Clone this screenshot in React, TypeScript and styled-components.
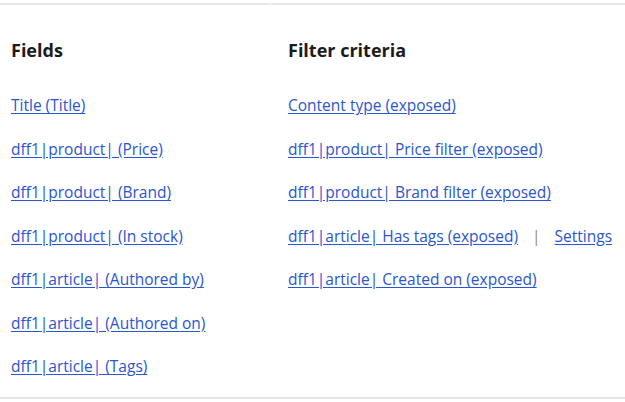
import styled, { createGlobalStyle } from "styled-components";

const GlobalStyle = createGlobalStyle`
  body {
    margin: 0;
    background: #fff;
    font-family: "Open Sans", "Noto Sans", sans-serif;
  }
`;

const Page = styled.div`
  padding-top: 3px;
  width: 625px;
  height: 402px;
  box-sizing: border-box;
`;

const Table = styled.div`
  display: grid;
  grid-template-columns: 270px 1fr;
  column-gap: 1px;
  height: 394px;
  border-bottom: 2px solid #e4e4e4;
`;

const Column = styled.div<{ $pad: number }>`
  border-top: 2px solid #e6e6e6;
  padding-left: ${({ $pad }) => $pad}px;
  padding-top: 33px;
`;

const Heading = styled.h2`
  margin: 0 0 33px;
  font-size: 18px;
  font-weight: 700;
  line-height: 24px;
  color: #1b1b1b;
`;

const List = styled.ul`
  list-style: none;
  margin: 0;
  padding: 0;
  display: flex;
  flex-direction: column;
  gap: 23.5px;
`;

const Item = styled.li`
  font-size: 15.5px;
  line-height: 20px;
  white-space: nowrap;
  display: flex;
  align-items: center;
`;

const Link = styled.a`
  color: #2a55d3;
  text-decoration: underline;
  text-underline-offset: 2px;
`;

const Sep = styled.span`
  color: #a08466;
  margin: 0 14px;
`;

const fields = [
  "Title (Title)",
  "dff1|product|_(Price)",
  "dff1|product|_(Brand)",
  "dff1|product|_(In stock)",
  "dff1|article|_(Authored by)",
  "dff1|article|_(Authored on)",
  "dff1|article|_(Tags)",
];

const filters = [
  { label: "Content type (exposed)" },
  { label: "dff1|product|_Price filter (exposed)" },
  { label: "dff1|product|_Brand filter (exposed)" },
  { label: "dff1|article|_Has tags (exposed)", settings: true },
  { label: "dff1|article|_Created on (exposed)" },
];

export default function App() {
  return (
    <>
      <GlobalStyle />
      <Page>
        <Table>
          <Column $pad={11}>
            <Heading>Fields</Heading>
            <List>
              {fields.map((f) => (
                <Item key={f}>
                  <Link href="#">{f.replace("_", " ")}</Link>
                </Item>
              ))}
            </List>
          </Column>
          <Column $pad={17}>
            <Heading>Filter criteria</Heading>
            <List>
              {filters.map((f) => (
                <Item key={f.label}>
                  <Link href="#">{f.label.replace("_", " ")}</Link>
                  {f.settings && (
                    <>
                      <Sep>|</Sep>
                      <Link href="#">Settings</Link>
                    </>
                  )}
                </Item>
              ))}
            </List>
          </Column>
        </Table>
      </Page>
    </>
  );
}
